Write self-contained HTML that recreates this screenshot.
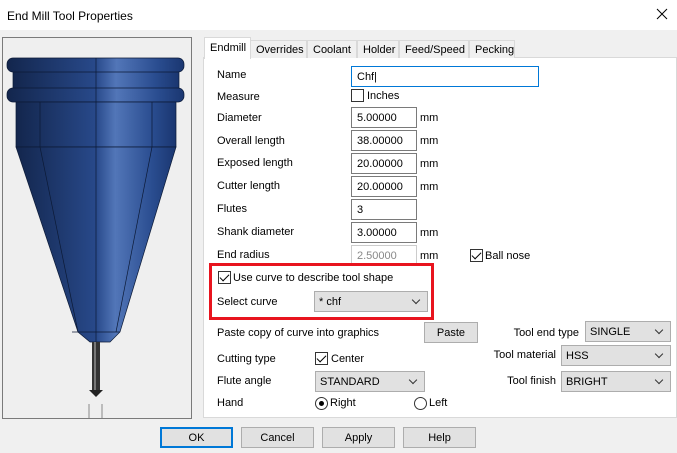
<!DOCTYPE html>
<html><head><style>
*{box-sizing:border-box;margin:0;padding:0}
body{width:677px;height:453px;background:#f0f0f0;font-family:"Liberation Sans",sans-serif;font-size:11px;color:#000;position:relative;overflow:hidden}
.a{position:absolute;white-space:nowrap}
.r{position:absolute;white-space:nowrap;text-align:right}
.title{top:0;left:0;width:677px;height:30px;background:#fff}
.in{position:absolute;background:#fff;border:1px solid #7a7a7a;height:21px;padding:4px 0 0 5px}
.sel{position:absolute;background:#e1e1e1;border:1px solid #adadad;height:21px;padding:4px 0 0 4px}
.sel::after{content:"";position:absolute;right:8px;top:5px;width:5px;height:5px;border-right:1px solid #333;border-bottom:1px solid #333;transform:rotate(45deg)}
.btn{position:absolute;background:#e1e1e1;border:1px solid #adadad;height:21px;text-align:center;padding-top:4px}
.cb{position:absolute;width:13px;height:13px;border:1px solid #333;background:#fff}
.cb.c::after{content:"";position:absolute;left:3px;top:0px;width:4px;height:8px;border-right:1px solid #000;border-bottom:1px solid #000;transform:rotate(45deg)}
.rd{position:absolute;width:13px;height:13px;border:1px solid #333;border-radius:50%;background:#fff}
.tab{position:absolute;top:40px;height:18px;border:1px solid #d9d9d9;border-bottom:none;background:#f0f0f0;padding:3px 0 0 5px}
</style></head><body>
<div class="a title"></div>
<div class="a" style="left:7px;top:9px;font-size:12px">End Mill Tool Properties</div>
<svg class="a" style="left:656px;top:8px" width="12" height="12"><path d="M1 1L11 11M11 1L1 11" stroke="#000" stroke-width="1"/></svg>

<div class="a" style="left:2px;top:37px;width:190px;height:382px;border:1px solid #7a7a7a;background:#efefef"></div>
<svg class="a" style="left:0;top:30px" width="200" height="400">
<defs><linearGradient id="g" x1="0" x2="1"><stop offset="0" stop-color="#13264d"/><stop offset="0.5" stop-color="#28498a"/><stop offset="0.62" stop-color="#5276b8"/><stop offset="0.85" stop-color="#2a4d90"/><stop offset="1" stop-color="#1a3670"/></linearGradient></defs>
<rect x="13" y="41" width="166" height="18" fill="url(#g)" stroke="#0c1a36" stroke-width="0.7"/>
<rect x="7" y="28" width="177" height="14" rx="6" fill="url(#g)" stroke="#0c1a36" stroke-width="0.7"/>
<rect x="7" y="58" width="177" height="14" rx="6" fill="url(#g)" stroke="#0c1a36" stroke-width="0.7"/>
<path d="M16 72 L176 72 L176 117 L16 117 Z" fill="url(#g)" stroke="#0c1a36" stroke-width="0.7"/>
<path d="M16 117 L176 117 L120 302 L110 312 L90 312 L78 302 Z" fill="url(#g)" stroke="#0c1a36" stroke-width="0.7"/>
<path d="M96 28 L96 312 M40 72 L40 117 L78 302 M152 72 L152 117 L116 302 M72 302 L120 302" stroke="#0c1a36" stroke-width="0.7" fill="none"/>
<rect x="92" y="312" width="8" height="50" fill="#333"/>
<rect x="94" y="312" width="2" height="50" fill="#777"/>
<path d="M89 360 L103 360 L96 367 Z" fill="#222"/>
<path d="M89 374 L89 388 M102 374 L102 388" stroke="#888"/>
</svg>

<div class="a" style="left:203px;top:57px;width:474px;height:361px;background:#fff;border:1px solid #d9d9d9"></div>
<div class="a" style="left:204px;top:37px;width:47px;height:22px;background:#fff;border:1px solid #d9d9d9;border-bottom:none;padding:4px 0 0 5px">Endmill</div>
<div class="tab" style="left:250px;width:57px">Overrides</div>
<div class="tab" style="left:307px;width:50px">Coolant</div>
<div class="tab" style="left:357px;width:42px">Holder</div>
<div class="tab" style="left:399px;width:70px">Feed/Speed</div>
<div class="tab" style="left:469px;width:46px">Pecking</div>

<div class="a" style="left:217px;top:69px">Name</div>
<div class="in" style="left:351px;top:66px;width:188px;border-color:#0078d7">Chf|</div>
<div class="a" style="left:217px;top:91px">Measure</div>
<div class="cb" style="left:351px;top:89px"></div><div class="a" style="left:367px;top:90px">Inches</div>
<div class="a" style="left:217px;top:112px">Diameter</div><div class="in" style="left:351px;top:107px;width:66px">5.00000</div><div class="a" style="left:420px;top:112px">mm</div>
<div class="a" style="left:217px;top:135px">Overall length</div><div class="in" style="left:351px;top:130px;width:66px">38.00000</div><div class="a" style="left:420px;top:135px">mm</div>
<div class="a" style="left:217px;top:157px">Exposed length</div><div class="in" style="left:351px;top:153px;width:66px">20.00000</div><div class="a" style="left:420px;top:158px">mm</div>
<div class="a" style="left:217px;top:180px">Cutter length</div><div class="in" style="left:351px;top:176px;width:66px">20.00000</div><div class="a" style="left:420px;top:181px">mm</div>
<div class="a" style="left:217px;top:203px">Flutes</div><div class="in" style="left:351px;top:199px;width:66px">3</div>
<div class="a" style="left:217px;top:226px">Shank diameter</div><div class="in" style="left:351px;top:222px;width:66px">3.00000</div><div class="a" style="left:420px;top:227px">mm</div>
<div class="a" style="left:217px;top:249px">End radius</div><div class="in" style="left:351px;top:245px;width:66px;color:#888;border-color:#ccc">2.50000</div><div class="a" style="left:420px;top:250px">mm</div>
<div class="cb c" style="left:470px;top:249px"></div><div class="a" style="left:485px;top:250px">Ball nose</div>

<div class="a" style="left:209px;top:263px;width:225px;height:57px;border:3px solid #e8141e"></div>
<div class="cb c" style="left:218px;top:271px"></div><div class="a" style="left:233px;top:272px">Use curve to describe tool shape</div>
<div class="a" style="left:217px;top:296px">Select curve</div>
<div class="sel" style="left:314px;top:291px;width:114px">* chf</div>

<div class="a" style="left:217px;top:327px">Paste copy of curve into graphics</div>
<div class="btn" style="left:424px;top:322px;width:54px">Paste</div>
<div class="r" style="right:98px;top:327px">Tool end type</div>
<div class="sel" style="left:585px;top:321px;width:86px">SINGLE</div>
<div class="r" style="right:121px;top:349px">Tool material</div>
<div class="sel" style="left:561px;top:345px;width:110px">HSS</div>
<div class="r" style="right:121px;top:375px">Tool finish</div>
<div class="sel" style="left:561px;top:371px;width:110px">BRIGHT</div>

<div class="a" style="left:217px;top:353px">Cutting type</div>
<div class="cb c" style="left:315px;top:352px"></div><div class="a" style="left:331px;top:353px">Center</div>
<div class="a" style="left:217px;top:375px">Flute angle</div>
<div class="sel" style="left:315px;top:371px;width:110px">STANDARD</div>
<div class="a" style="left:217px;top:397px">Hand</div>
<div class="rd" style="left:315px;top:397px"></div><div class="a" style="left:319px;top:401px;width:5px;height:5px;border-radius:50%;background:#000"></div>
<div class="a" style="left:330px;top:397px">Right</div>
<div class="rd" style="left:414px;top:397px"></div><div class="a" style="left:429px;top:397px">Left</div>

<div class="btn" style="left:160px;top:427px;width:73px;border:2px solid #0078d7;padding-top:3px">OK</div>
<div class="btn" style="left:241px;top:427px;width:73px">Cancel</div>
<div class="btn" style="left:322px;top:427px;width:73px">Apply</div>
<div class="btn" style="left:403px;top:427px;width:73px">Help</div>
</body></html>
